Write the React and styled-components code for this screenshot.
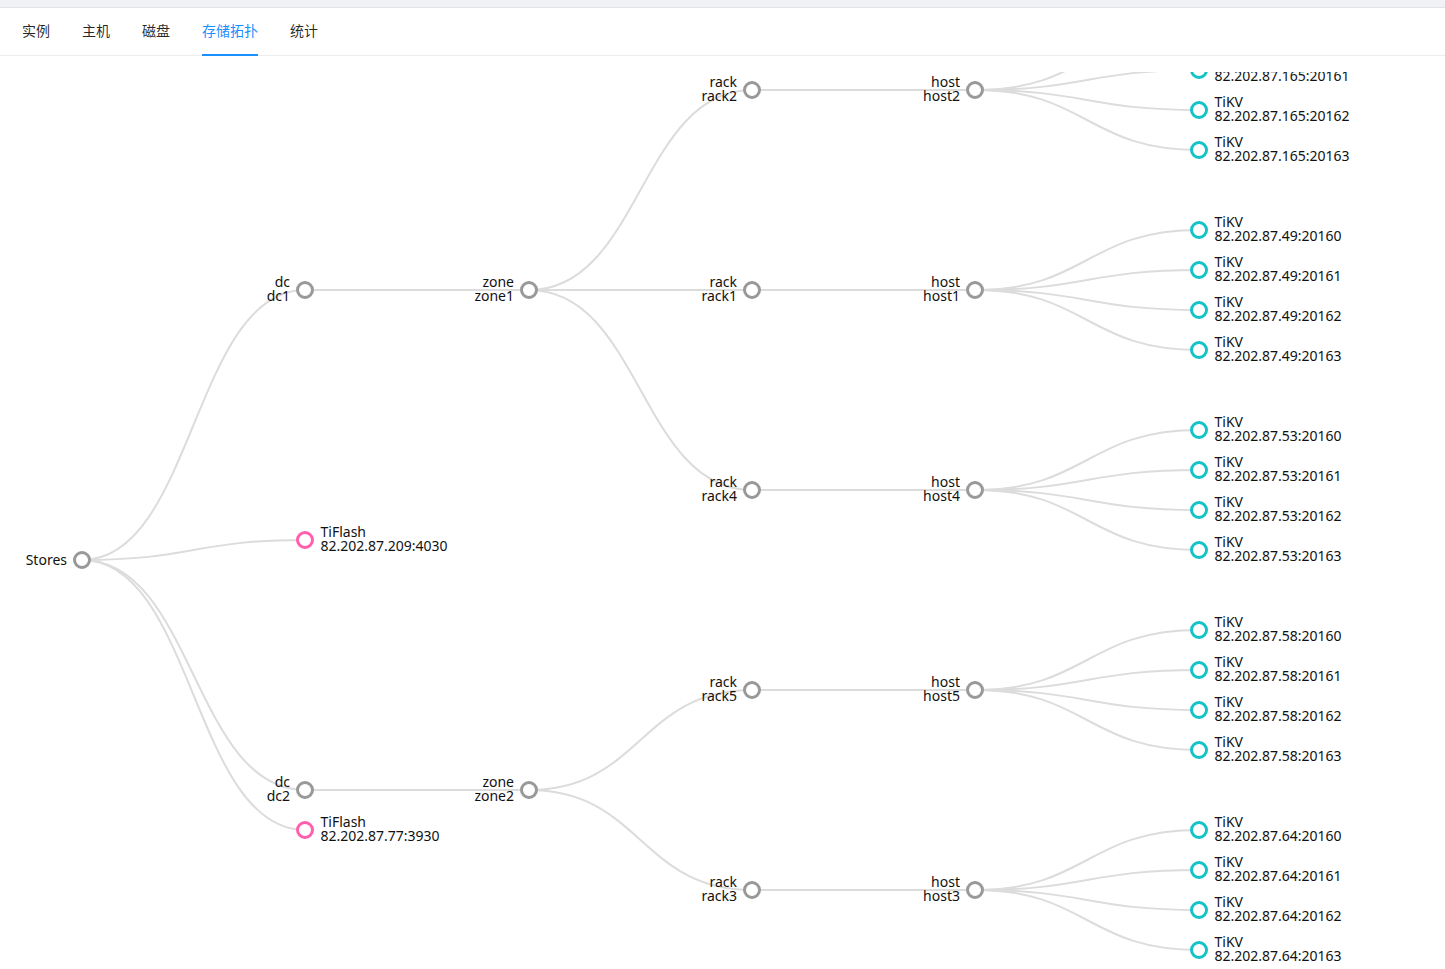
import React from "react";
import styled, { createGlobalStyle } from "styled-components";

const GlobalStyle = createGlobalStyle`
  html, body { margin: 0; padding: 0; background: #fff; overflow: hidden; }
  body { font-family: "Noto Sans", "Noto Sans CJK SC", sans-serif; }
`;

const Page = styled.div`
  width: 1445px;
  height: 969px;
  display: flex;
  flex-direction: column;
  background: #fff;
`;

const TopStrip = styled.div`
  height: 7px;
  background: #f0f2f5;
  border-bottom: 1px solid #e2e2e2;
  flex: none;
`;

const TabBar = styled.nav`
  display: flex;
  gap: 32px;
  padding: 0 22px;
  border-bottom: 1px solid #ececec;
  flex: none;
`;

const Tab = styled.div`
  padding: 11px 0 ${(p) => (p.$active ? "13px" : "15px")};
  line-height: 22px;
  font-size: 14px;
  font-family: "Noto Sans CJK SC", sans-serif;
  color: ${(p) => (p.$active ? "#1890ff" : "rgba(0,0,0,0.85)")};
  border-bottom: ${(p) => (p.$active ? "2px solid #1890ff" : "none")};
  margin-bottom: -1px;
  cursor: pointer;
`;

const Canvas = styled.div`
  margin-top: 16px;
  flex: 1;
  overflow: hidden;
`;

const Svg = styled.svg`
  display: block;
  width: 1445px;
  height: 897px;
`;

const Link = styled.path`
  fill: none;
  stroke: #dcdcdc;
  stroke-width: 2px;
`;

const colors = { inner: "#999999", tiflash: "#ff5fae", tikv: "#14c3c8" };

const NodeCircle = styled.circle`
  fill: #fff;
  stroke: ${(p) => colors[p.$kind]};
  stroke-width: 3px;
`;

const Label = styled.text`
  font-family: "Noto Sans", "Segoe UI", sans-serif;
  font-size: 14px;
  fill: #111;
`;

const X = [82, 305, 529, 752, 975, 1199];

function buildTree() {
  const nodes = [];
  const links = [];
  const add = (n, parent) => {
    nodes.push(n);
    if (parent) links.push({ s: parent, t: n });
    return n;
  };
  const stores = add({ x: X[0], y: 560, kind: "inner", lines: ["Stores"], id: "stores" });
  const dc1 = add({ x: X[1], y: 290, kind: "inner", lines: ["dc", "dc1"], id: "dc1" }, stores);
  add({ x: X[1], y: 540, kind: "tiflash", lines: ["TiFlash", "82.202.87.209:4030"], leaf: true, id: "tf1" }, stores);
  const dc2 = add({ x: X[1], y: 790, kind: "inner", lines: ["dc", "dc2"], id: "dc2" }, stores);
  add({ x: X[1], y: 830, kind: "tiflash", lines: ["TiFlash", "82.202.87.77:3930"], leaf: true, id: "tf2" }, stores);
  const zone1 = add({ x: X[2], y: 290, kind: "inner", lines: ["zone", "zone1"], id: "z1" }, dc1);
  const zone2 = add({ x: X[2], y: 790, kind: "inner", lines: ["zone", "zone2"], id: "z2" }, dc2);
  const racks = [
    { zone: zone1, rack: "rack2", host: "host2", y: 90, ip: "165" },
    { zone: zone1, rack: "rack1", host: "host1", y: 290, ip: "49" },
    { zone: zone1, rack: "rack4", host: "host4", y: 490, ip: "53" },
    { zone: zone2, rack: "rack5", host: "host5", y: 690, ip: "58" },
    { zone: zone2, rack: "rack3", host: "host3", y: 890, ip: "64" },
  ];
  racks.forEach((r) => {
    const rack = add({ x: X[3], y: r.y, kind: "inner", lines: ["rack", r.rack], id: r.rack }, r.zone);
    const host = add({ x: X[4], y: r.y, kind: "inner", lines: ["host", r.host], id: r.host }, rack);
    [0, 1, 2, 3].forEach((i) => {
      add(
        {
          x: X[5],
          y: r.y - 60 + i * 40,
          kind: "tikv",
          lines: ["TiKV", `82.202.87.${r.ip}:2016${i}`],
          leaf: true,
          id: `${r.host}-${i}`,
        },
        host
      );
    });
  });
  return { nodes, links };
}

const { nodes, links } = buildTree();

const linkPath = ({ s, t }) => {
  const mx = (s.x + t.x) / 2;
  return `M${s.x},${s.y}C${mx},${s.y} ${mx},${t.y} ${t.x},${t.y}`;
};

function NodeLabel({ n }) {
  if (n.lines.length === 1) {
    return (
      <Label x={n.x - 15} y={n.y + 5} textAnchor="end">
        {n.lines[0]}
      </Label>
    );
  }
  const x = n.leaf ? n.x + 15.5 : n.x - 15;
  return (
    <Label textAnchor={n.leaf ? "start" : "end"}>
      <tspan x={x} y={n.y - 3.5}>{n.lines[0]}</tspan>
      <tspan x={x} y={n.y + 10.5}>{n.lines[1]}</tspan>
    </Label>
  );
}

const tabs = ["实例", "主机", "磁盘", "存储拓扑", "统计"];

export default function App() {
  return (
    <Page>
      <GlobalStyle />
      <TopStrip />
      <TabBar>
        {tabs.map((t) => (
          <Tab key={t} $active={t === "存储拓扑"}>
            {t}
          </Tab>
        ))}
      </TabBar>
      <Canvas>
        <Svg viewBox="0 72 1445 897">
          <g>
            {links.map((l) => (
              <Link key={l.s.id + l.t.id} d={linkPath(l)} />
            ))}
          </g>
          <g>
            {nodes.map((n) => (
              <g key={n.id}>
                <NodeCircle cx={n.x} cy={n.y} r={7.5} $kind={n.kind} />
                <NodeLabel n={n} />
              </g>
            ))}
          </g>
        </Svg>
      </Canvas>
    </Page>
  );
}
